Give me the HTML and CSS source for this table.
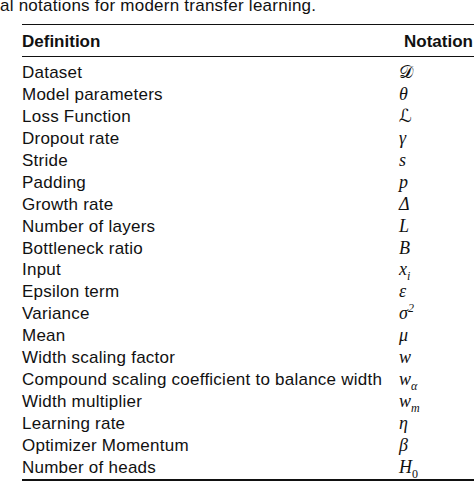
FILE: index.html
```html
<!DOCTYPE html>
<html>
<head>
<meta charset="utf-8">
<link rel="stylesheet" href="styles.css">
</head>
<body>
<div class="caption">al notations for modern transfer learning.</div>
<table class="notations">
  <thead>
    <tr><th class="def">Definition</th><th class="not">Notation</th></tr>
  </thead>
  <tbody>
    <tr class="first"><td class="def">Dataset</td><td class="sym"><span class="cal">𝒟</span></td></tr>
    <tr><td class="def">Model parameters</td><td class="sym">θ</td></tr>
    <tr><td class="def">Loss Function</td><td class="sym"><span class="cal">ℒ</span></td></tr>
    <tr><td class="def">Dropout rate</td><td class="sym">γ</td></tr>
    <tr><td class="def">Stride</td><td class="sym">s</td></tr>
    <tr><td class="def">Padding</td><td class="sym">p</td></tr>
    <tr><td class="def">Growth rate</td><td class="sym">Δ</td></tr>
    <tr><td class="def">Number of layers</td><td class="sym">L</td></tr>
    <tr><td class="def">Bottleneck ratio</td><td class="sym">B</td></tr>
    <tr><td class="def">Input</td><td class="sym">x<sub>i</sub></td></tr>
    <tr><td class="def">Epsilon term</td><td class="sym">ε</td></tr>
    <tr><td class="def">Variance</td><td class="sym">σ<sup>2</sup></td></tr>
    <tr><td class="def">Mean</td><td class="sym">μ</td></tr>
    <tr><td class="def">Width scaling factor</td><td class="sym">w</td></tr>
    <tr><td class="def">Compound scaling coefficient to balance width</td><td class="sym">w<sub>α</sub></td></tr>
    <tr><td class="def">Width multiplier</td><td class="sym">w<sub>m</sub></td></tr>
    <tr><td class="def">Learning rate</td><td class="sym">η</td></tr>
    <tr><td class="def">Optimizer Momentum</td><td class="sym">β</td></tr>
    <tr class="last"><td class="def">Number of heads</td><td class="sym">H<sub class="up">0</sub></td></tr>
  </tbody>
</table>
</body>
</html>
```
FILE: styles.css
```css
html, body {
  margin: 0;
  padding: 0;
  background: #ffffff;
  overflow: hidden;
}
body {
  width: 474px;
  height: 482px;
  font-family: "Liberation Sans", Arial, sans-serif;
  font-size: 17px;
  letter-spacing: 0.24px;
  color: #111;
}
.caption {
  height: 24px;
  line-height: 12px;
  padding-top: 0;
  white-space: nowrap;
}
.notations {
  margin-left: 22px;
  width: 480px;
  border-collapse: collapse;
  border-top: 1.5px solid #111;
  border-bottom: 2px solid #111;
}
.notations th,
.notations td {
  padding: 0;
  text-align: left;
  vertical-align: top;
  white-space: nowrap;
}
.notations thead th {
  font-weight: bold;
  letter-spacing: 0;
  line-height: 22px;
  padding-top: 6px;
  padding-bottom: 3px;
  border-bottom: 1px solid #111;
}
.notations th.def,
.notations td.def {
  width: 377px;
}
.notations th.not {
  padding-left: 5px;
}
.notations tbody td {
  height: 21.94px;
  line-height: 21.94px;
}
.notations tr.first td {
  padding-top: 5px;
}
.notations tr.last td {
  padding-bottom: 0;
}
.sym {
  font-family: "Liberation Serif", "Times New Roman", serif;
  font-style: italic;
  font-size: 18px;
  letter-spacing: 0;
}
.sym sub,
.sym sup {
  font-size: 12px;
  line-height: 0;
}
.sym sub.up {
  font-style: normal;
}
.cal {
  font-family: "DejaVu Sans", "Liberation Serif", serif;
  font-style: normal;
  line-height: 0;
}
```
